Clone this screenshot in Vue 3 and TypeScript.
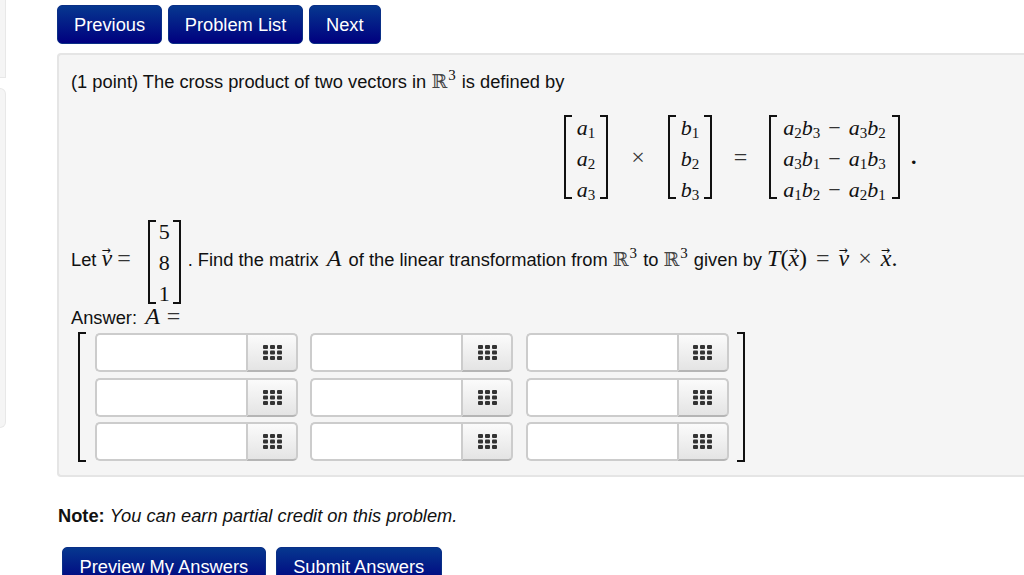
<template>
  <div class="page">
    <div class="sidebar">
      <div class="side-card first"></div>
      <div class="side-card second"></div>
    </div>

    <div class="main">
      <div class="nav">
        <a v-for="label in navButtons" :key="label" class="btn">{{ label }}</a>
      </div>

      <div class="panel">
        <p class="statement">
          (1 point) The cross product of two vectors in
          <span class="bb">ℝ</span><sup class="sup">3</sup> is defined by
        </p>

        <div class="display">
          <div class="matrix first-matrix">
            <span class="br left"></span>
            <div class="cells">
              <div v-for="n in 3" :key="n" class="cell"><i>a</i><sub>{{ n }}</sub></div>
            </div>
            <span class="br right"></span>
          </div>
          <span class="op times">×</span>
          <div class="matrix second-matrix">
            <span class="br left"></span>
            <div class="cells">
              <div v-for="n in 3" :key="n" class="cell"><i>b</i><sub>{{ n }}</sub></div>
            </div>
            <span class="br right"></span>
          </div>
          <span class="op equals">=</span>
          <div class="matrix third-matrix">
            <span class="br left"></span>
            <div class="cells">
              <div v-for="row in crossRows" :key="row[0]" class="cell">
                <i>a</i><sub>{{ row[0] }}</sub><i>b</i><sub>{{ row[1] }}</sub><span class="minus">−</span><i>a</i><sub>{{ row[2] }}</sub><i>b</i><sub>{{ row[3] }}</sub>
              </div>
            </div>
            <span class="br right"></span>
          </div>
          <span class="dot">.</span>
        </div>

        <div class="let-line">
          <span class="let-start">Let <span class="math"><span class="vec"><i>v</i></span><span class="rel first-rel">=</span></span></span>
          <div class="matrix small-matrix">
            <span class="br left"></span>
            <div class="cells">
              <div v-for="n in vector" :key="n" class="cell">{{ n }}</div>
            </div>
            <span class="br right"></span>
          </div>
          <span class="let-text">
            . Find the matrix <i class="math letter">A</i> of the linear transformation from
            <span class="bb">ℝ</span><sup class="sup">3</sup> to
            <span class="bb">ℝ</span><sup class="sup">3</sup> given by
            <span class="math"><i>T</i>(<span class="vec"><i>x</i></span>)<span class="rel">=</span><span class="vec"><i>v</i></span><span class="rel">×</span><span class="vec"><i>x</i></span>.</span>
          </span>
        </div>

        <div class="answer-label">Answer: <span class="math"><i class="letter">A</i><span class="rel first-rel">=</span></span></div>

        <div class="answer-matrix">
          <span class="br left"></span>
          <div class="answer-grid">
            <div v-for="n in 9" :key="n" class="input-group">
              <div class="field"></div>
              <div class="addon">
                <svg width="19" height="15" viewBox="0 0 19 15">
                  <template v-for="y in iconRows" :key="y">
                    <rect v-for="x in iconCols" :key="x" :x="x" :y="y" width="5" height="4" rx="1" fill="#333" />
                  </template>
                </svg>
              </div>
            </div>
          </div>
          <span class="br right"></span>
        </div>
      </div>

      <p class="note"><b>Note:</b> <em>You can earn partial credit on this problem.</em></p>

      <div class="submit-row">
        <a v-for="label in submitButtons" :key="label" class="btn">{{ label }}</a>
      </div>
    </div>
  </div>
</template>

<script setup lang="ts">
const navButtons: string[] = ['Previous', 'Problem List', 'Next'];
const submitButtons: string[] = ['Preview My Answers', 'Submit Answers'];
const crossRows: number[][] = [
  [2, 3, 3, 2],
  [3, 1, 1, 3],
  [1, 2, 2, 1],
];
const vector: number[] = [5, 8, 1];
const iconRows: number[] = [0, 5.5, 11];
const iconCols: number[] = [0, 7, 14];
</script>

<style scoped>
.page {
  display: flex;
  width: 1024px;
  height: 575px;
  overflow: hidden;
  background: #fff;
  color: #111;
  font-family: "Liberation Sans", Arial, sans-serif;
  font-size: 18.3px;
  line-height: 20px;
}

.sidebar {
  display: flex;
  flex-direction: column;
  gap: 10px;
  width: 6px;
  flex: none;
}

.side-card {
  box-sizing: border-box;
  background: #f5f5f5;
  border: 1px solid #e8e8e8;
  border-left: none;
}

.side-card.first {
  height: 78px;
  border-top: none;
}

.side-card.second {
  height: 340px;
  border-radius: 0 6px 6px 0;
}

.main {
  margin-left: 51px;
  padding-top: 5px;
  flex: 1;
  min-width: 0;
}

.nav {
  display: flex;
  gap: 5.6px;
}

.btn {
  display: block;
  box-sizing: border-box;
  height: 39px;
  padding: 0 16px;
  line-height: 37px;
  color: #fff;
  background: linear-gradient(#06378f, #00007f);
  border: 1px solid #0a2f86;
  border-radius: 5px;
}

.panel {
  box-sizing: border-box;
  height: 424px;
  margin-top: 9px;
  padding: 16px 0 0 12px;
  background: #f5f5f5;
  border: 2px solid #e5e5e5;
  border-right: none;
  border-radius: 4px 0 0 4px;
}

.statement {
  margin: 0;
  white-space: nowrap;
}

.bb {
  font-family: "DejaVu Serif", serif;
  font-size: 19px;
  color: #444;
}

.sup {
  margin: 0 1px;
  font-family: "Liberation Serif", serif;
  font-size: 15px;
  line-height: 0;
  vertical-align: 8px;
}

.display {
  display: flex;
  align-items: center;
  margin: 23px 0 0 493px;
}

.matrix {
  display: flex;
  font-family: "Liberation Serif", serif;
  font-size: 22px;
}

.br {
  flex: none;
  box-sizing: border-box;
  width: 8px;
  border: 2px solid #111;
}

.br.left {
  border-right: none;
}

.br.right {
  border-left: none;
}

.cells {
  display: flex;
  flex-direction: column;
  margin-top: -3px;
}

.cell {
  flex: none;
  height: 31px;
  line-height: 31px;
  text-align: center;
  white-space: nowrap;
}

.cell sub {
  font-size: 15px;
  line-height: 0;
  vertical-align: -3px;
}

.first-matrix,
.second-matrix,
.third-matrix {
  height: 84px;
}

.first-matrix .cells,
.second-matrix .cells {
  width: 28px;
}

.third-matrix .cells {
  width: 115px;
}

.minus {
  margin: 0 8px;
  color: #333;
}

.op {
  font-family: "Liberation Serif", serif;
  font-size: 24px;
  color: #333;
  text-align: center;
}

.times {
  width: 60px;
}

.equals {
  width: 57px;
}

.dot {
  margin-left: 11px;
  font-family: "Liberation Serif", serif;
  font-size: 22px;
  font-weight: bold;
}

.let-line {
  display: flex;
  align-items: center;
  margin-top: 21px;
  white-space: pre-wrap;
}

.let-start,
.let-text {
  margin-bottom: 7px;
}

.math {
  font-family: "Liberation Serif", serif;
  font-size: 24px;
}

.letter {
  margin: 0 2px 0 3px;
}

.rel {
  margin: 0 9px;
  color: #333;
}

.first-rel {
  margin: 0 0 0 5px;
}

.vec {
  position: relative;
  display: inline-block;
}

.vec::before {
  content: "→";
  position: absolute;
  left: 0;
  top: -7px;
  font-size: 11px;
  font-family: "DejaVu Sans", sans-serif;
}

.small-matrix {
  height: 84px;
  margin-left: 17px;
}

.small-matrix .cells {
  width: 17px;
  margin-top: -4px;
}

.let-text {
  margin-left: 7px;
  white-space: nowrap;
}

.answer-label {
  margin-top: 2px;
  white-space: nowrap;
}

.answer-matrix {
  display: flex;
  margin: 4px 0 0 7px;
}

.answer-matrix .br {
  height: 130px;
}

.answer-grid {
  display: grid;
  grid-template-columns: repeat(3, 203px);
  grid-auto-rows: 39px;
  column-gap: 12.3px;
  row-gap: 5.5px;
  margin: 1px 8px 0 9px;
}

.input-group {
  display: flex;
}

.field {
  box-sizing: border-box;
  width: 151px;
  background: #fff;
  border: 2px solid #ccc;
  border-right: none;
  border-radius: 5px 0 0 5px;
}

.addon {
  box-sizing: border-box;
  display: flex;
  align-items: center;
  justify-content: center;
  width: 52px;
  background: linear-gradient(#fbfbfb, #e4e4e4);
  border: 2px solid #ccc;
  border-bottom-color: #b5b5b5;
  border-radius: 0 5px 5px 0;
}

.note {
  margin: 29px 0 0 1px;
  white-space: nowrap;
}

.submit-row {
  display: flex;
  gap: 10px;
  margin: 21px 0 0 5px;
}

.submit-row .btn {
  padding: 0 16.5px;
}
</style>
